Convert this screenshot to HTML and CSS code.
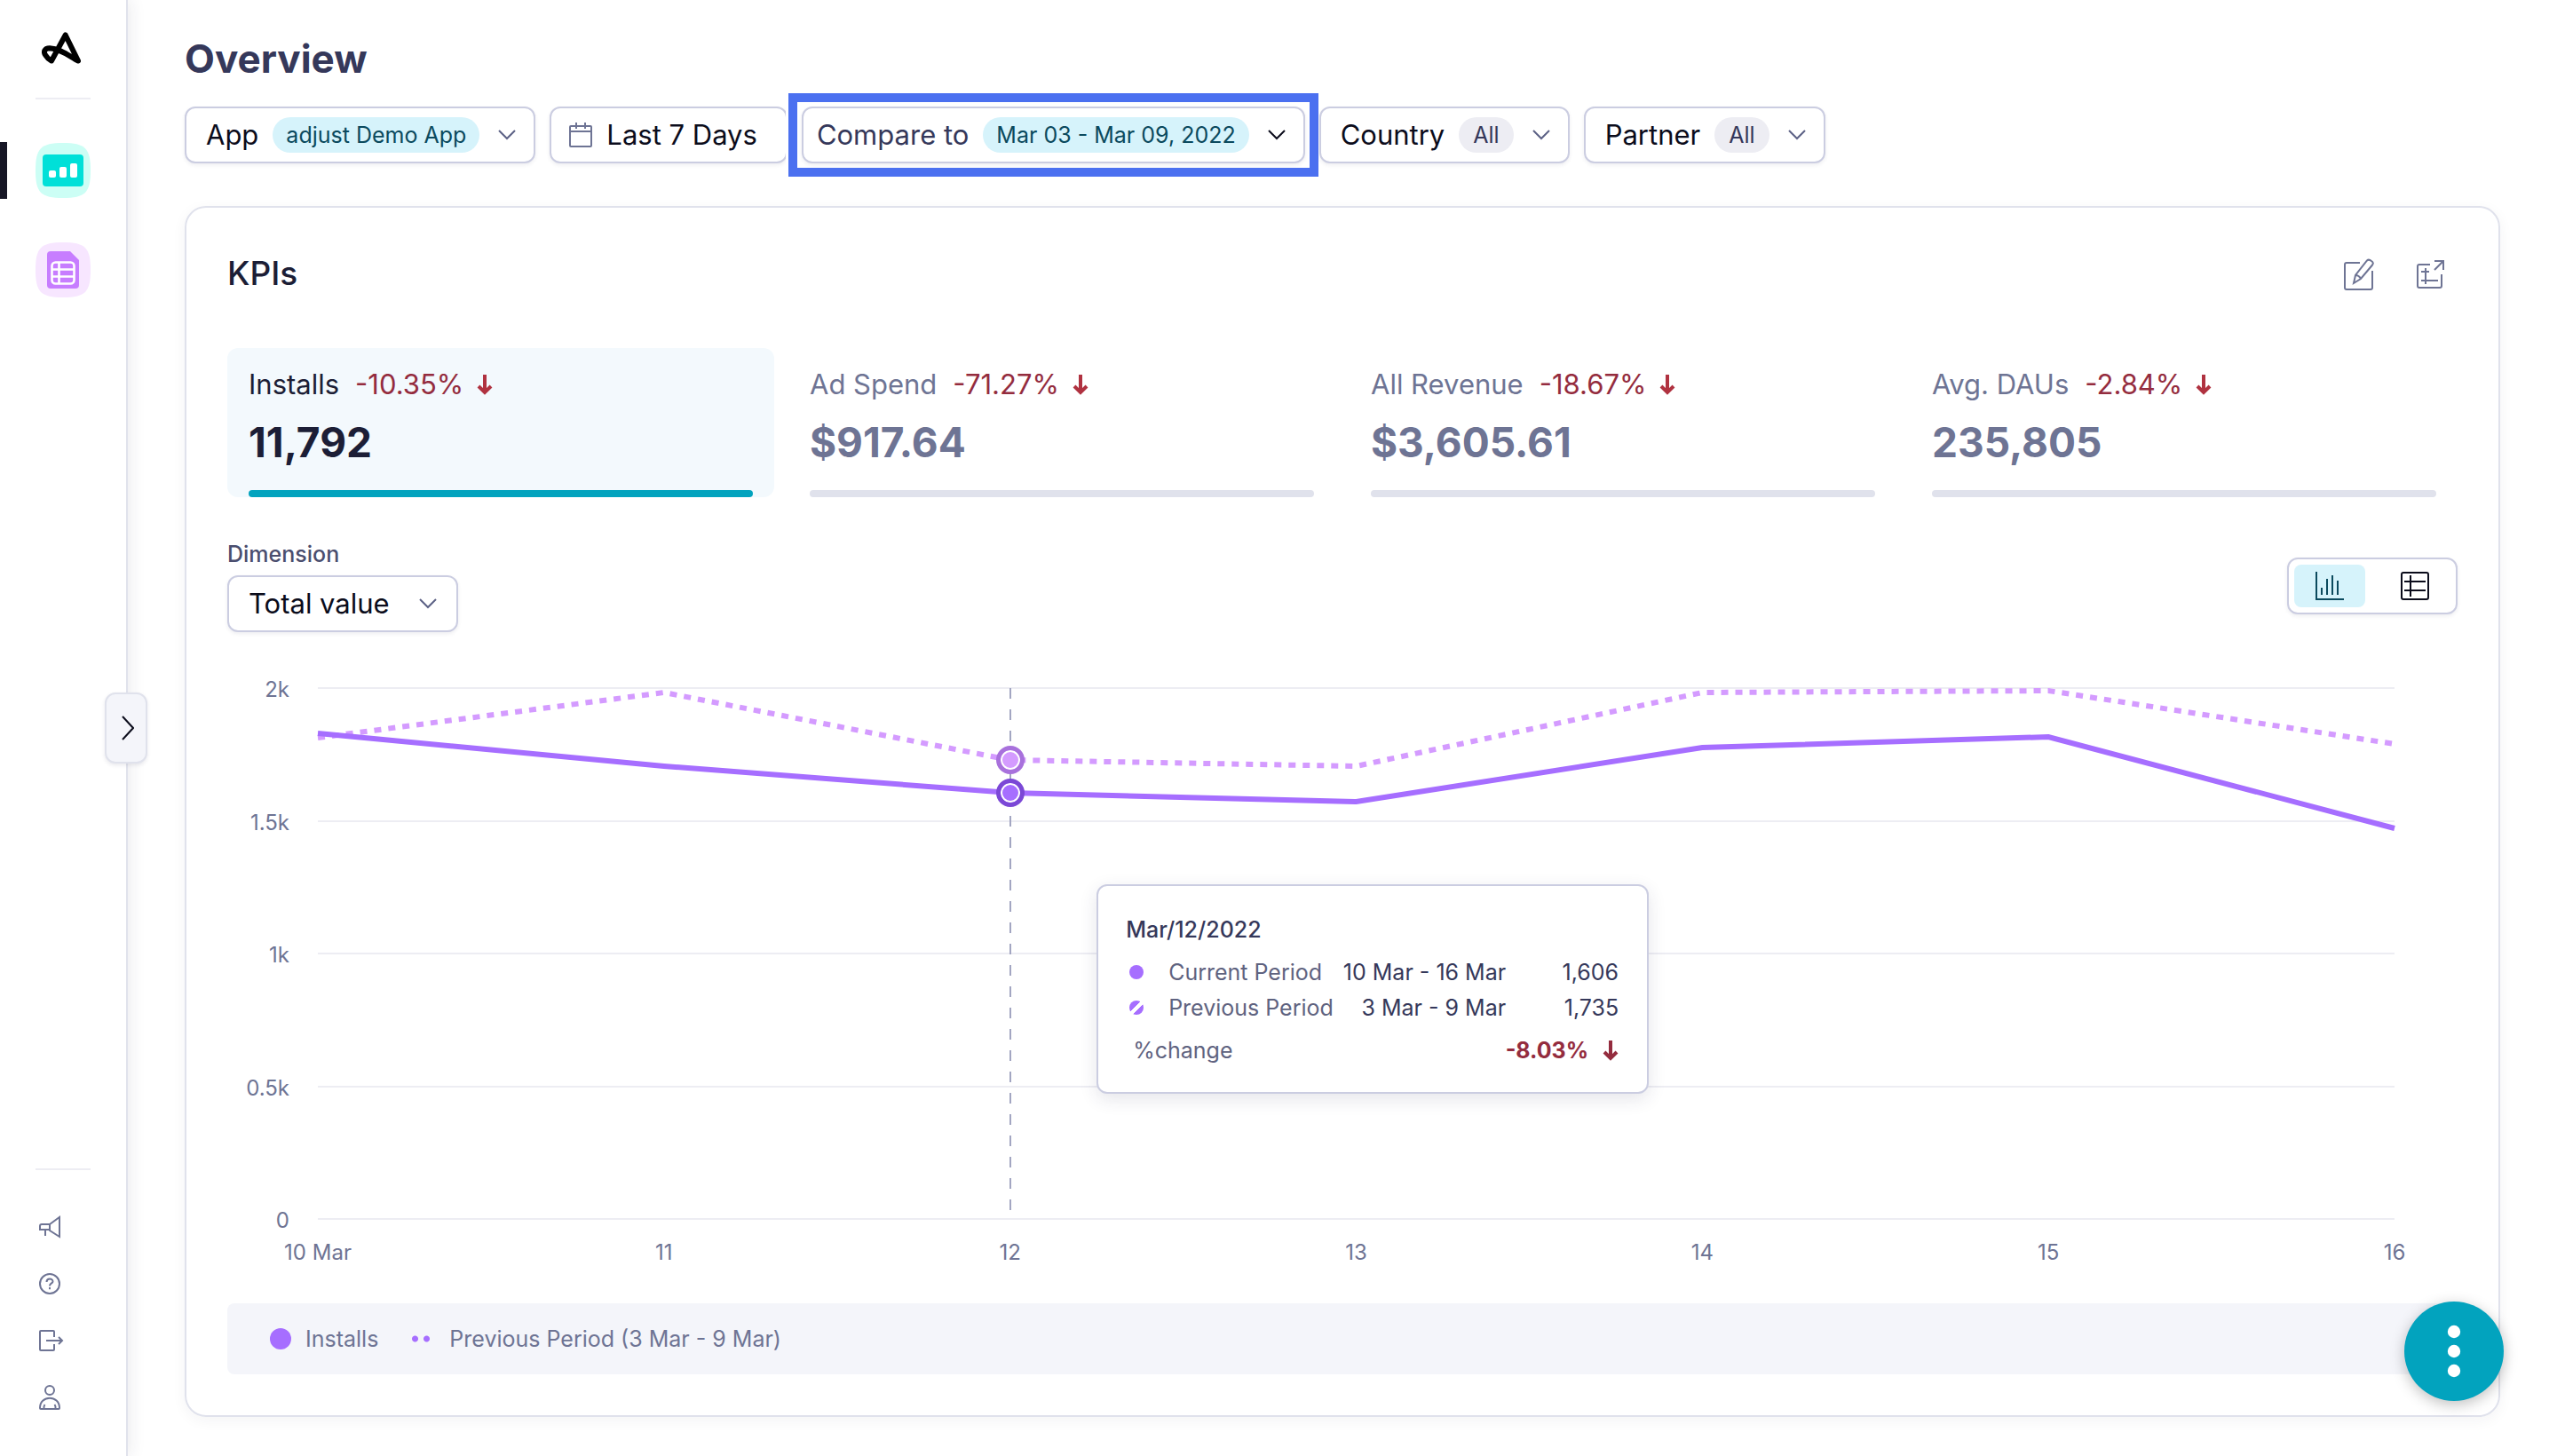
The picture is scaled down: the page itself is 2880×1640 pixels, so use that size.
FILE: index.html
```html
<!doctype html>

<html lang="en">
  <head>
    <title>Overview</title>
    <meta charset="utf-8" />
    <meta name="viewport" content="width=device-width, initial-scale=1">
    <link rel="stylesheet" href="styles.css">
  </head>

  <body>
    <aside class="sidebar">
      <a href="#" class="logo" aria-label="Home">
        <svg width="44" height="36" viewBox="0 0 44 36" fill="none" stroke="#000" stroke-width="6" stroke-linejoin="round">
          <path d="M11 32.500L26.700 3.500L41 32.500C32 28 21 18.500 9 18.200C3 18.200 1.500 22.500 4.500 26.500C6 29 8 31 11 32.500Z"/>
        </svg>
      </a>

      <nav class="main-nav">
        <a href="#" class="nav-link active" aria-label="Dashboard">
          <svg width="62" height="62" viewBox="0 0 62 62">
            <path fill="#ccfef5" d="M0 31C0 6 6 0 31 0S62 6 62 31 56 62 31 62 0 56 0 31Z"/>
            <rect x="8" y="13" width="46" height="36" rx="4" fill="#00e0d8"/>
            <g fill="#fff">
              <rect x="15" y="31" width="8" height="8" rx="2"/>
              <rect x="27" y="27" width="8" height="12" rx="2"/>
              <rect x="39" y="23" width="8" height="16" rx="2"/>
            </g>
          </svg>
        </a>
        <a href="#" class="nav-link" aria-label="Reports">
          <svg width="62" height="62" viewBox="0 0 62 62">
            <path fill="#f7e6ff" d="M0 31C0 6 6 0 31 0S62 6 62 31 56 62 31 62 0 56 0 31Z"/>
            <path fill="#c77dff" d="M17 10H39L49 20V48Q49 52 45 52H17Q13 52 13 48V14Q13 10 17 10Z"/>
            <g fill="none" stroke="#fff" stroke-width="2.600">
              <rect x="18.500" y="22.500" width="25" height="24" rx="4"/>
              <path d="M18 30.500H44M18 38.500H44M26.500 22V47"/>
            </g>
          </svg>
        </a>
      </nav>

      <nav class="bottom-nav">
        <a href="#" aria-label="What's new">
          <svg width="28" height="28" viewBox="0 0 28 28">
            <path d="M12 11L23 3V25L12 18ZM12 11H3Q1 11 1 13V17H12M7 17V24"/>
          </svg>
        </a>
        <a href="#" aria-label="Help">
          <svg width="28" height="28" viewBox="0 0 28 28">
            <circle cx="12" cy="14" r="11"/>
            <path d="M8.500 12C8.500 7.500 15.500 7.500 15.500 11.500C15.500 13.500 12 13.500 12 16.500M12 18V20.200"/>
          </svg>
        </a>
        <a href="#" aria-label="Log out">
          <svg width="28" height="28" viewBox="0 0 28 28">
            <path d="M17 10V4Q17 3 16 3H2Q1 3 1 4V24Q1 25 2 25H16Q17 25 17 24V18M8 14H26M22 10L26 14L22 18"/>
          </svg>
        </a>
        <a href="#" aria-label="Account">
          <svg width="28" height="28" viewBox="0 0 28 28">
            <circle cx="12" cy="6" r="5"/>
            <path d="M2 27Q1 27 1 26C1 11 23 11 23 26Q23 27 22 27ZM5.500 27Q5 24 6.500 22M18.500 27Q19 24 17.500 22"/>
          </svg>
        </a>
      </nav>

      <button class="expand" aria-label="Expand menu">
        <svg width="14" height="28" viewBox="0 0 14 28" fill="none" stroke="#0b0c1b" stroke-width="2">
          <path d="M1 1L13 14L1 27"/>
        </svg>
      </button>
    </aside>

    <main>
      <h1>Overview</h1>

      <div class="filters">
        <button class="filter">
          App <span class="chip">adjust Demo App</span>
          <svg class="chevron" width="20" height="12" viewBox="0 0 20 12"><path d="M1 1L10 10L19 1"/></svg>
        </button>
        <button class="filter period">
          <svg class="calendar" width="26" height="28" viewBox="0 0 26 28"><path d="M1 5Q1 4 2 4H24Q25 4 25 5V26Q25 27 24 27H2Q1 27 1 26ZM1 10H25M8 0V7M18 0V7"/></svg>
          Last 7 Days
        </button>
        <button class="filter compare">
          Compare to <span class="chip">Mar 03 - Mar 09, 2022</span>
          <svg class="chevron" width="20" height="12" viewBox="0 0 20 12"><path d="M1 1L10 10L19 1"/></svg>
        </button>
        <button class="filter">
          Country <span class="chip grey">All</span>
          <svg class="chevron" width="20" height="12" viewBox="0 0 20 12"><path d="M1 1L10 10L19 1"/></svg>
        </button>
        <button class="filter">
          Partner <span class="chip grey">All</span>
          <svg class="chevron" width="20" height="12" viewBox="0 0 20 12"><path d="M1 1L10 10L19 1"/></svg>
        </button>
      </div>

      <section class="card">
        <div class="card-head">
          <h2>KPIs</h2>
          <div class="actions">
            <button aria-label="Edit">
              <svg width="34" height="36" viewBox="0 0 34 36">
                <path d="M18 5H3Q1 5 1 7V33Q1 35 3 35H30Q32 35 32 33V14M11 28L13 19L26 2.500Q28 0.500 31 3Q34 5 32 7.500L19 23ZM13 19Q17 19 19 23"/>
              </svg>
            </button>
            <button aria-label="Export">
              <svg width="34" height="36" viewBox="0 0 34 36">
                <path d="M15 7H3Q1 7 1 9V31Q1 33 3 33H26Q28 33 28 31V18M20 3H30V13M20 13L30 3M10 11V29M5 15H14M5 25H24"/>
              </svg>
            </button>
          </div>
        </div>

        <div class="kpis">
          <button class="kpi selected">
            <span class="kpi-label">Installs <span class="change">-10.35%</span>
              <svg class="down" width="18" height="24" viewBox="0 0 18 24"><path d="M9 1V21M2 14L9 21L16 14"/></svg></span>
            <span class="kpi-value">11,792</span>
          </button>
          <button class="kpi">
            <span class="kpi-label">Ad Spend <span class="change">-71.27%</span>
              <svg class="down" width="18" height="24" viewBox="0 0 18 24"><path d="M9 1V21M2 14L9 21L16 14"/></svg></span>
            <span class="kpi-value">$917.64</span>
          </button>
          <button class="kpi">
            <span class="kpi-label">All Revenue <span class="change">-18.67%</span>
              <svg class="down" width="18" height="24" viewBox="0 0 18 24"><path d="M9 1V21M2 14L9 21L16 14"/></svg></span>
            <span class="kpi-value">$3,605.61</span>
          </button>
          <button class="kpi">
            <span class="kpi-label">Avg. DAUs <span class="change">-2.84%</span>
              <svg class="down" width="18" height="24" viewBox="0 0 18 24"><path d="M9 1V21M2 14L9 21L16 14"/></svg></span>
            <span class="kpi-value">235,805</span>
          </button>
        </div>

        <div class="controls">
          <div class="dimension">
            <label for="dimension">Dimension</label>
            <div class="select-box">
              <select id="dimension">
                <option>Total value</option>
              </select>
              <svg class="chevron" width="20" height="12" viewBox="0 0 20 12"><path d="M1 1L10 10L19 1"/></svg>
            </div>
          </div>

          <div class="view-toggle">
            <button class="on" aria-label="Chart view">
              <svg width="32" height="32" viewBox="0 0 32 32"><path d="M1 0V31H32M7 26V18M13 26V8M19 26V4M25 26V10"/></svg>
            </button>
            <button aria-label="Table view">
              <svg width="32" height="32" viewBox="0 0 32 32"><rect x="1" y="1" width="30" height="30" rx="2"/><path d="M4 11H28M4 21H28M11 4V28"/></svg>
            </button>
          </div>
        </div>

        <div class="chart">
          <div class="y-axis">
            <span>2k</span>
            <span>1.5k</span>
            <span>1k</span>
            <span>0.5k</span>
            <span>0</span>
          </div>

          <div class="plot">
            <svg class="lines" viewBox="0 0 2340 598" preserveAspectRatio="none">
              <path class="grid" d="M0 0H2340M0 150H2340M0 299H2340M0 449H2340M0 598H2340"/>
              <path class="cursor" d="M780 0V590"/>
              <polyline class="previous" points="0,56 390,5 780,81 1170,88 1560,5 1950,3 2340,63"/>
              <polyline class="current" points="0,51 390,88 780,118 1170,128 1560,67 1950,55 2340,158"/>
            </svg>
            <i class="marker marker-previous"></i>
            <i class="marker marker-current"></i>

            <div class="tooltip">
              <strong>Mar/12/2022</strong>
              <div class="tip-row">
                <i class="dot"></i><span class="name">Current Period</span>
                <span class="dates">10 Mar - 16 Mar</span><span class="count">1,606</span>
              </div>
              <div class="tip-row">
                <i class="dot striped"></i><span class="name">Previous Period</span>
                <span class="dates">3 Mar - 9 Mar</span><span class="count">1,735</span>
              </div>
              <div class="tip-change">
                <span>%change</span>
                <b>-8.03%</b>
                <svg class="down" width="18" height="24" viewBox="0 0 18 24"><path d="M9 1V21M2 14L9 21L16 14"/></svg>
              </div>
            </div>
          </div>

          <div class="x-axis">
            <span>10 Mar</span>
            <span>11</span>
            <span>12</span>
            <span>13</span>
            <span>14</span>
            <span>15</span>
            <span>16</span>
          </div>
        </div>

        <div class="legend">
          <i class="big-dot"></i>
          <span>Installs</span>
          <i class="two-dots"></i>
          <span>Previous Period (3 Mar - 9 Mar)</span>
        </div>
      </section>
    </main>

    <button class="fab" aria-label="More">
      <svg width="16" height="60" viewBox="0 0 16 60" fill="#fff">
        <circle cx="8" cy="8" r="7.200"/>
        <circle cx="8" cy="30" r="7.200"/>
        <circle cx="8" cy="52" r="7.200"/>
      </svg>
    </button>
  </body>
</html>
```

FILE: styles.css
```css
*{
  box-sizing: border-box;
  margin: 0;
  padding: 0;
}

body{
  display: flex;
  min-height: 100vh;
  background-color: white;
  color: #0b0c1b;
  font-family: Inter, "Liberation Sans", sans-serif;
  font-size: 25px;
  line-height: 32px;
}

button, select{
  font: inherit;
  color: inherit;
  background: none;
  border: none;
  cursor: pointer;
}

svg{
  display: block;
  flex: none;
}

/* sidebar */
.sidebar{
  position: sticky;
  top: 0;
  flex: none;
  display: flex;
  flex-direction: column;
  width: 144px;
  height: 100vh;
  border-right: 2px solid #e0e2ec;
  box-shadow: 4px 0 16px rgba(40,44,60,0.08);
}

.logo{
  margin: 0 40px;
  padding: 36px 7px 38px;
  border-bottom: 2px solid #ededf3;
}

.main-nav{
  display: flex;
  flex-direction: column;
  gap: 48px;
  margin-top: 48px;
}

.nav-link{
  padding: 1px 32px;
  border-left: 8px solid transparent;
}

.nav-link.active{
  border-left-color: #161625;
}

.bottom-nav{
  display: flex;
  flex-direction: column;
  gap: 36px;
  margin: auto 40px 0;
  padding: 50px 4px 52px;
  border-top: 2px solid #ededf3;
}

.bottom-nav svg, .actions svg{
  fill: none;
  stroke: #6e7494;
  stroke-width: 2;
}

.expand{
  position: absolute;
  top: 780px;
  right: -24px;
  display: flex;
  align-items: center;
  justify-content: center;
  width: 48px;
  height: 80px;
  padding-left: 4px;
  border: 2px solid #e0e2ec;
  border-radius: 12px;
  background-color: #f4f5fa;
  box-shadow: 0 2px 4px rgba(40,44,80,0.1);
}

/* page */
main{
  flex: 1;
  min-width: 0;
  padding: 40px 64px 44px;
}

h1{
  color: #35385a;
  font-size: 44px;
  line-height: 52px;
  font-weight: 700;
}

.filters{
  display: flex;
  gap: 16px;
  margin-top: 28px;
}

.filter, .select-box, .view-toggle{
  display: flex;
  align-items: center;
  height: 64px;
  border: 2px solid #cbcde1;
  border-radius: 12px;
  background-color: white;
  box-shadow: 0 2px 4px rgba(40,44,80,0.08);
}

.filter{
  position: relative;
  padding: 0 20px 0 22px;
  font-size: 31px;
  white-space: nowrap;
}

.chip{
  height: 40px;
  margin: 0 21px 0 16px;
  padding: 0 15px;
  border-radius: 20px;
  background-color: #d6f3fb;
  color: #0b4a5e;
  font-size: 25px;
  line-height: 40px;
}

.chip.grey{
  padding: 0 16px;
  background-color: #ededf3;
  color: #35385a;
}

.chevron{
  fill: none;
  stroke: #5c6185;
  stroke-width: 2;
}

.calendar{
  margin-right: 16px;
  fill: none;
  stroke: #6e7494;
  stroke-width: 2;
}

.period{
  padding: 0 32px 0 20px;
}

.compare{
  color: #35385a;
  padding-left: 15px;
}

.compare .chevron{
  stroke: #0b0c1b;
}

.compare::after{
  content: "";
  position: absolute;
  inset: -17px;
  border: 10px solid #4b70f0;
  box-shadow: 0 0 0 3px white;
}

/* kpi card */
.card{
  margin-top: 48px;
  padding: 46px;
  border: 2px solid #e0e2ec;
  border-radius: 24px;
  box-shadow: 0 4px 16px rgba(40,44,60,0.05);
}

.card-head{
  display: flex;
  align-items: center;
  justify-content: space-between;
  height: 56px;
}

h2{
  color: #1c1e36;
  font-size: 37px;
  font-weight: 500;
}

.actions{
  display: flex;
  gap: 48px;
  padding: 2px 12px 0 0;
}

.kpis{
  display: grid;
  grid-template-columns: repeat(4, 1fr);
  gap: 16px;
  margin-top: 56px;
}

.kpi{
  display: block;
  padding: 20px 24px 0;
  border-radius: 12px;
  text-align: left;
  color: #6e7494;
}

.kpi.selected{
  background-color: #f3f9fd;
  color: #1c1e36;
}

.kpi-label{
  display: flex;
  align-items: center;
  height: 42px;
  font-size: 31px;
}

.change{
  margin: 0 15px 0 18px;
  color: #942c3e;
}

.down{
  fill: none;
  stroke: #b03240;
  stroke-width: 4;
}

.kpi-value{
  display: block;
  padding: 16px 0 26px;
  font-size: 46px;
  line-height: 56px;
  font-weight: 700;
}

.kpi::after{
  content: "";
  display: block;
  height: 8px;
  border-radius: 4px;
  background-color: #e0e2ec;
}

.kpi.selected::after{
  background-color: #02a3be;
}

.controls{
  display: flex;
  justify-content: space-between;
  margin-top: 48px;
}

.dimension label{
  display: block;
  margin-bottom: 8px;
  color: #4a4e6e;
  font-weight: 500;
}

.select-box{
  position: relative;
}

.select-box select{
  width: 256px;
  height: 60px;
  padding-left: 22px;
  font-size: 31px;
  appearance: none;
}

.select-box .chevron{
  position: absolute;
  right: 22px;
  pointer-events: none;
}

.view-toggle{
  gap: 16px;
  margin-top: 20px;
  padding: 6px;
}

.view-toggle button{
  display: flex;
  align-items: center;
  justify-content: center;
  width: 80px;
  height: 48px;
  border-radius: 8px;
}

.view-toggle .on{
  background-color: #d6f3fb;
  color: #0b4a5e;
}

.view-toggle svg{
  fill: none;
  stroke: currentColor;
  stroke-width: 2;
}

/* chart */
.chart{
  display: grid;
  grid-template-columns: 70px 1fr;
  column-gap: 32px;
  margin-top: 63px;
  padding-right: 71px;
  color: #6e7494;
}

.y-axis, .x-axis{
  display: flex;
  justify-content: space-between;
  font-size: 24px;
}

.y-axis{
  flex-direction: column;
  margin: -14px 0 -18px;
  text-align: right;
}

.plot{
  position: relative;
  height: 598px;
}

.lines{
  width: 100%;
  height: 100%;
  overflow: visible;
  fill: none;
}

.lines *{
  vector-effect: non-scaling-stroke;
}

.grid{
  stroke: #ededf3;
  stroke-width: 2;
}

.cursor{
  stroke: #a3a6c2;
  stroke-width: 2;
  stroke-dasharray: 12 12;
  shape-rendering: crispEdges;
}

.previous{
  stroke: #d49bff;
  stroke-width: 6;
  stroke-dasharray: 8 8;
}

.current{
  stroke: #a66eff;
  stroke-width: 6;
}

.marker{
  position: absolute;
  left: 33.33%;
  width: 32px;
  height: 32px;
  margin: -16px;
  border: 5px solid;
  border-radius: 50%;
  box-shadow: inset 0 0 0 2px white;
}

.marker-previous{
  top: 81px;
  border-color: #a871dc;
  background-color: #d49bff;
}

.marker-current{
  top: 118px;
  border-color: #7b48d6;
  background-color: #a66eff;
}

.tooltip{
  position: absolute;
  top: 221px;
  left: 37.5%;
  width: 622px;
  height: 236px;
  padding: 33px 32px 0 31px;
  border: 2px solid #cbcde1;
  border-radius: 12px;
  background-color: white;
  color: #35385a;
  box-shadow: 0 6px 20px rgba(40,44,80,0.12);
}

.tooltip strong{
  display: block;
  margin-bottom: 12px;
  font-weight: 500;
}

.tip-row{
  display: grid;
  grid-template-columns: 48px 190px 190px 1fr;
  align-items: center;
  height: 40px;
  white-space: nowrap;
}

.tip-row .name, .tip-change span{
  color: #5f6380;
}

.dates, .count{
  text-align: right;
}

.dot{
  width: 16px;
  height: 16px;
  margin-left: 4px;
  border-radius: 50%;
  background-color: #a66eff;
}

.dot.striped{
  background: linear-gradient(135deg, #a66eff 42%, white 42%, white 60%, #a66eff 60%);
}

.tip-change{
  display: flex;
  align-items: center;
  margin-top: 12px;
  padding-left: 8px;
}

.tip-change b{
  margin: 0 16px 0 auto;
  color: #942c3e;
}

.tip-change .down{
  stroke: #942c3e;
}

.x-axis{
  grid-column: 2;
  margin-top: 22px;
}

.x-axis span{
  display: flex;
  justify-content: center;
  width: 0;
  white-space: nowrap;
}

.legend{
  display: flex;
  align-items: center;
  height: 80px;
  margin-top: 41px;
  padding: 0 48px;
  border-radius: 8px;
  background-color: #f4f5fa;
  color: #6e7494;
}

.big-dot{
  width: 24px;
  height: 24px;
  margin-right: 16px;
  border-radius: 50%;
  background-color: #a66eff;
}

.two-dots{
  width: 26px;
  height: 8px;
  margin: 0 19px 0 35px;
  background: radial-gradient(circle, #a66eff 3px, transparent 4px) 0 0 / 13px 8px;
}

.fab{
  position: fixed;
  right: 60px;
  bottom: 62px;
  display: flex;
  align-items: center;
  justify-content: center;
  width: 112px;
  height: 112px;
  border-radius: 50%;
  background-color: #02a3be;
  box-shadow: 0 4px 16px rgba(0,0,0,0.25);
}
```
